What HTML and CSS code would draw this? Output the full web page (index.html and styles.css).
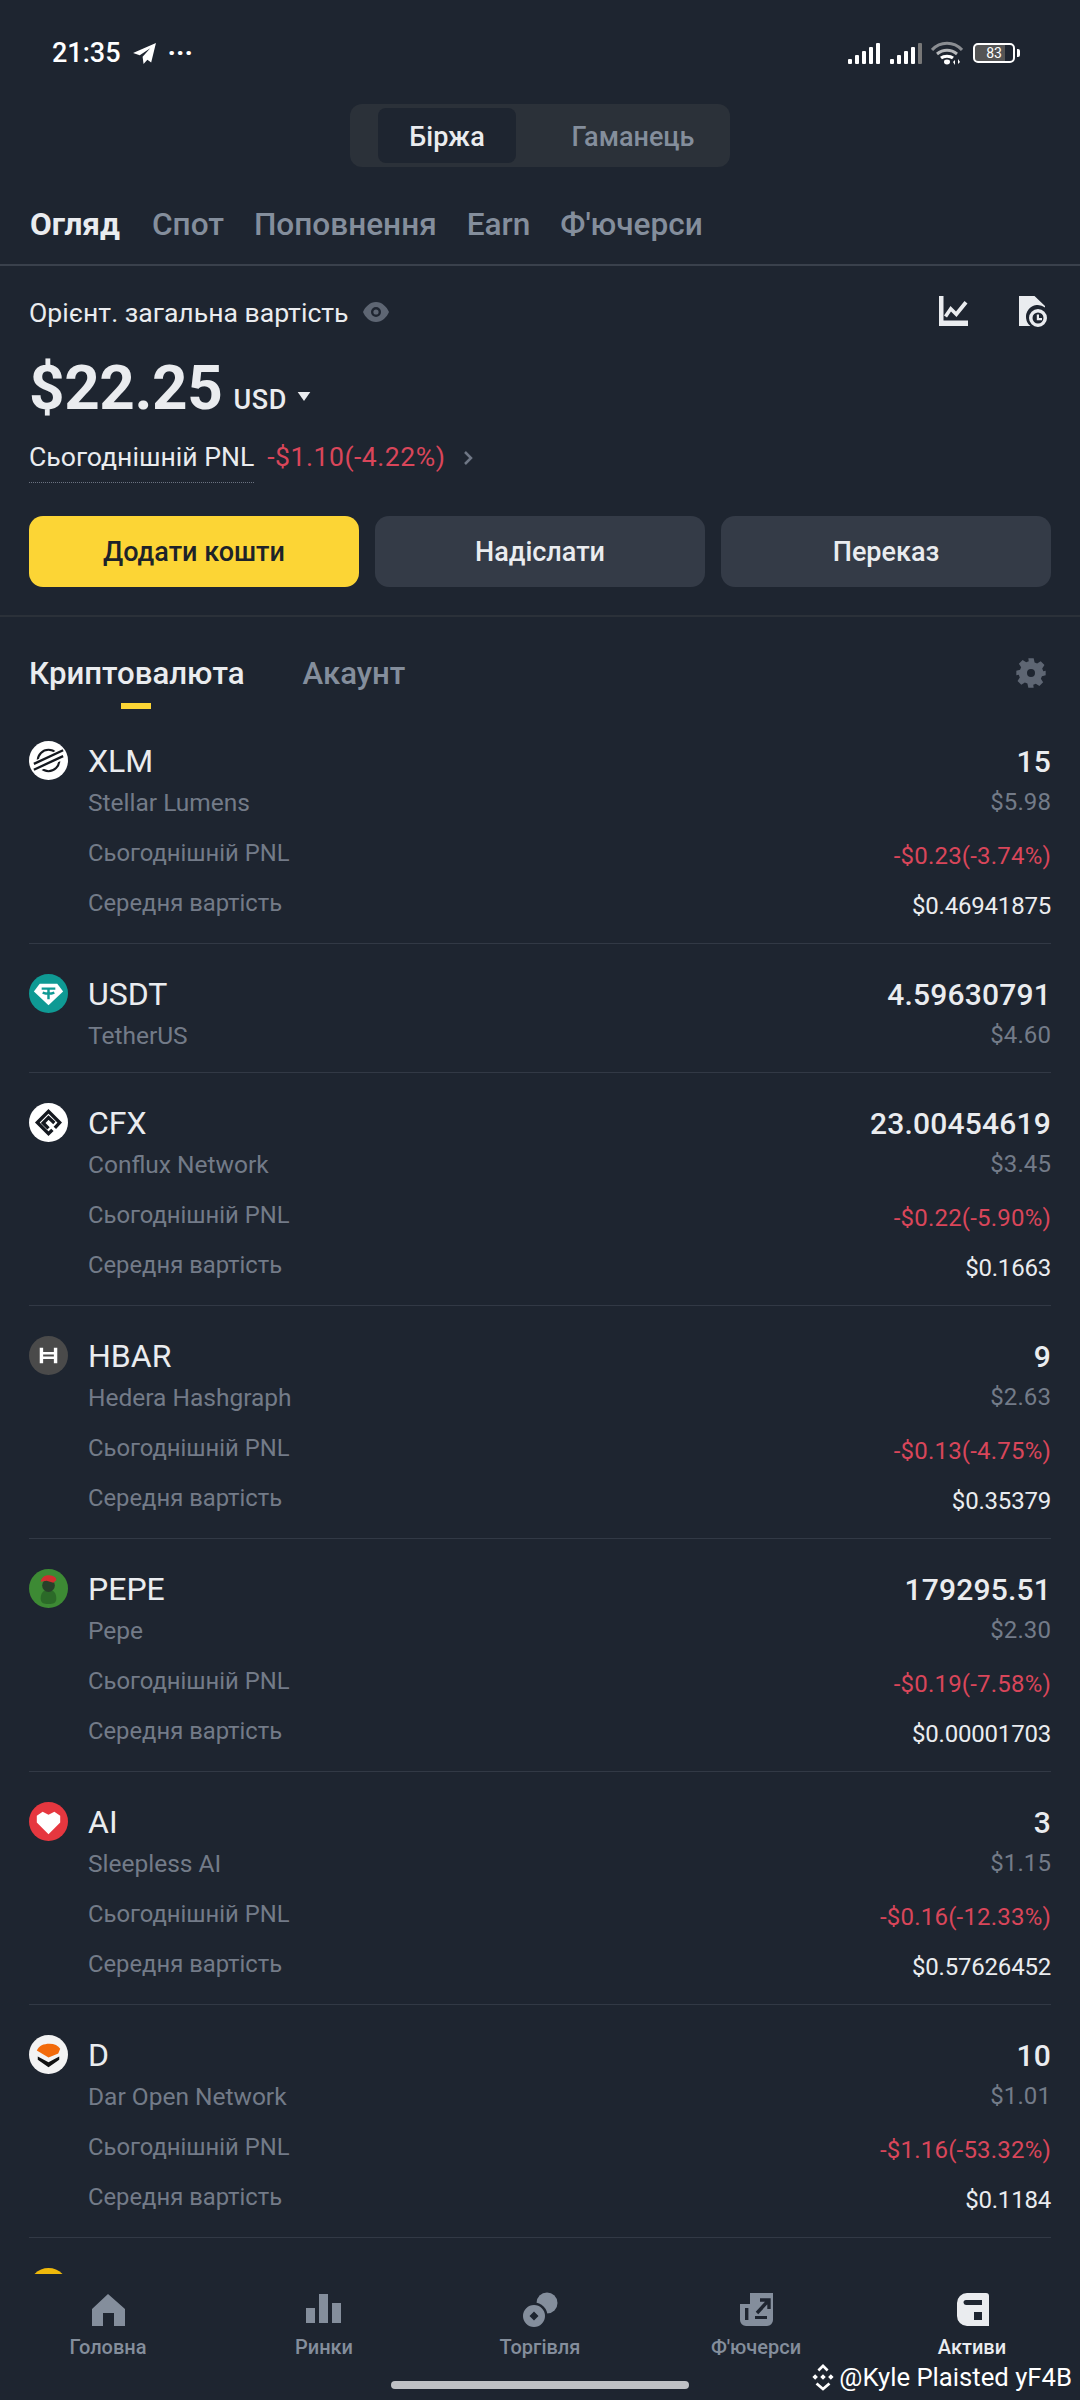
FILE: index.html
```html
<!DOCTYPE html>
<html lang="uk">
<head>
<meta charset="utf-8">
<title>Активи</title>
<link rel="stylesheet" href="styles.css">
</head>
<body>
<div class="app">
  <div class="status">
    <div class="status-left">
      <span class="time">21:35</span>
      <svg class="tg" viewBox="0 0 26 22"><path d="M25 0 1 10.500l7 2.300L19 5.500 11 14.500 12 22l4-4.500 4 3z" fill="#fff"/></svg>
      <span class="dots">···</span>
    </div>
    <div class="status-right">
      <svg class="sig" viewBox="0 0 32 22"><g fill="#fff"><rect x="0" y="17" width="4" height="5" rx="1"/><rect x="7" y="13" width="4" height="9" rx="1"/><rect x="14" y="9" width="4" height="13" rx="1"/><rect x="21" y="5" width="4" height="17" rx="1"/><rect x="28" y="1" width="4" height="21" rx="1"/></g></svg>
      <svg class="sig" viewBox="0 0 32 22"><g fill="#fff"><rect x="0" y="17" width="4" height="5" rx="1"/><rect x="7" y="13" width="4" height="9" rx="1"/><rect x="14" y="9" width="4" height="13" rx="1"/><rect x="21" y="5" width="4" height="17" rx="1"/></g><rect x="28" y="1" width="4" height="21" rx="1" fill="#777"/></svg>
      <svg class="wifi" viewBox="0 0 32 24"><path d="M1 9C9 0 23 0 31 9" fill="none" stroke="#8a8d92" stroke-width="3"/><path d="M6 13c6-5 14-5 20 0" fill="none" stroke="#b5b7ba" stroke-width="3"/><path d="M10 17c3-2.500 9-2.500 12 0" fill="none" stroke="#fff" stroke-width="3"/><ellipse cx="16" cy="21" rx="3" ry="2.400" fill="#fff"/><path d="M24 24v-5l-2 2zM27 18v5l2-2z" fill="#fff"/></svg>
      <div class="batt"><div class="batt-body">83</div><div class="batt-tip"></div></div>
    </div>
  </div>

  <div class="seg-wrap">
    <div class="seg">
      <div class="seg-item seg-on">Біржа</div>
      <div class="seg-item">Гаманець</div>
    </div>
  </div>

  <nav class="tabs">
    <span class="tab tab-on">Огляд</span>
    <span class="tab">Спот</span>
    <span class="tab">Поповнення</span>
    <span class="tab">Earn</span>
    <span class="tab">Ф'ючерси</span>
  </nav>

  <section class="summary">
    <div class="sum-head">
      <div class="sum-label">Орієнт. загальна вартість
        <svg class="eye" viewBox="0 0 28 22"><path fill-rule="evenodd" d="M14 1C8 1 3 6 1 11c2 5 7 10 13 10s11-5 13-10C25 6 20 1 14 1zm0 5a5 5 0 1 1 0 10 5 5 0 0 1 0-10z" fill="#5e6673"/><circle cx="14" cy="11" r="2.600" fill="#5e6673"/></svg>
      </div>
      <div class="sum-icons">
        <svg class="ico" viewBox="0 0 32 32"><path d="M3 1h4.500v24.500H32V31H3z" fill="#eaecef"/><path d="M8 20.500 14.500 11l5.500 5.500L28.500 6l3 2.500L20.500 22 15 16.500l-4 6z" fill="#eaecef"/></svg>
        <svg class="ico" viewBox="0 0 32 32"><path d="M3 1h15.500L29 11v1.500A11 11 0 0 0 14.500 31H3z" fill="#eaecef"/><path fill-rule="evenodd" d="M22 14a9 9 0 1 1 0 18 9 9 0 0 1 0-18zm0 3.500a5.500 5.500 0 1 0 0 11 5.500 5.500 0 0 0 0-11z" fill="#eaecef"/><path d="M20.800 19.500h2.200v3.500h3v2.200h-5.200z" fill="#eaecef"/></svg>
      </div>
    </div>
    <div class="total"><span class="total-num">$22.25</span><span class="total-cur">USD</span><svg class="caret" viewBox="0 0 14 10"><path d="M0 0h14L7 10z" fill="#eaecef"/></svg></div>
    <div class="today">
      <span class="today-label">Сьогоднішній PNL</span>
      <span class="today-val">-$1.10(-4.22%)</span>
      <svg class="chev" viewBox="0 0 10 16"><path d="M2 2l6 6-6 6" fill="none" stroke="#6f7785" stroke-width="2.500"/></svg>
    </div>
    <div class="actions">
      <div class="btn btn-y">Додати кошти</div>
      <div class="btn">Надіслати</div>
      <div class="btn">Переказ</div>
    </div>
  </section>

  <div class="asset-tabs">
    <div class="atab atab-on">Криптовалюта</div>
    <div class="atab">Акаунт</div>
    <svg class="gear" viewBox="0 0 24 24"><path fill-rule="evenodd" fill="#5e6673" d="M10 1h4l.7 3.100 1.900.8 2.700-1.700 2.800 2.800-1.700 2.700.8 1.900L23 10.300v3.400l-2.800.7-.8 1.900 1.700 2.700-2.800 2.800-2.700-1.700-1.900.8L14 23h-4l-.7-3.100-1.900-.8-2.700 1.700-2.800-2.800 1.700-2.700-.8-1.900L1 13.700v-3.400l2.800-.7.8-1.900-1.700-2.700 2.800-2.800 2.700 1.700 1.900-.8zm2 8a3 3 0 1 0 0 6 3 3 0 0 0 0-6z"/></svg>
  </div>

  <div class="rows">
    <article class="row">
      <svg class="coin" viewBox="0 0 40 40"><circle cx="20" cy="20" r="20" fill="#fff"/><circle cx="20" cy="20" r="11" fill="none" stroke="#14181f" stroke-width="2.200"/><path d="M5 24 35 10M5 30 35 16" stroke="#fff" stroke-width="6"/><path d="M5 23.500 35 9.500M5 29.500 35 15.500" stroke="#14181f" stroke-width="2.400"/></svg>
      <div class="row-body">
        <div class="line l1"><span class="sym">XLM</span><span class="qty">15</span></div>
        <div class="line l2"><span class="mut">Stellar Lumens</span><span class="num-mut">$5.98</span></div>
        <div class="line l3"><span class="lab">Сьогоднішній PNL</span><span class="neg">-$0.23(-3.74%)</span></div>
        <div class="line l4"><span class="lab">Середня вартість</span><span class="num">$0.46941875</span></div>
      </div>
    </article>
    <article class="row">
      <svg class="coin" viewBox="0 0 40 40"><circle cx="20" cy="20" r="20" fill="#0f9a94"/><path d="M11 10h18l6 8-15 14L5 18z" fill="#fff"/><path d="M13 15h14M20 15v11M14 19c4 1.500 8 1.500 12 0" stroke="#0f9a94" stroke-width="2.500" fill="none"/></svg>
      <div class="row-body">
        <div class="line l1"><span class="sym">USDT</span><span class="qty">4.59630791</span></div>
        <div class="line l2"><span class="mut">TetherUS</span><span class="num-mut">$4.60</span></div>
      </div>
    </article>
    <article class="row">
      <svg class="coin" viewBox="0 0 40 40"><circle cx="20" cy="20" r="20" fill="#fff"/><path d="M26.500 25.500 31.500 20 20 8.500 8.500 20 20 31.500l4-4" fill="none" stroke="#14181f" stroke-width="3.400"/><path d="M26 20.500 20 15l-5.500 5.500 5.500 5.500" fill="none" stroke="#14181f" stroke-width="3.400"/></svg>
      <div class="row-body">
        <div class="line l1"><span class="sym">CFX</span><span class="qty">23.00454619</span></div>
        <div class="line l2"><span class="mut">Conflux Network</span><span class="num-mut">$3.45</span></div>
        <div class="line l3"><span class="lab">Сьогоднішній PNL</span><span class="neg">-$0.22(-5.90%)</span></div>
        <div class="line l4"><span class="lab">Середня вартість</span><span class="num">$0.1663</span></div>
      </div>
    </article>
    <article class="row">
      <svg class="coin" viewBox="0 0 40 40"><circle cx="20" cy="20" r="20" fill="#4a4a4a"/><path d="M11 12h3.500v4.500h11V12H29v16h-3.500v-4.500h-11V28H11zm3.500 7v2h11v-2z" fill="#fff"/></svg>
      <div class="row-body">
        <div class="line l1"><span class="sym">HBAR</span><span class="qty">9</span></div>
        <div class="line l2"><span class="mut">Hedera Hashgraph</span><span class="num-mut">$2.63</span></div>
        <div class="line l3"><span class="lab">Сьогоднішній PNL</span><span class="neg">-$0.13(-4.75%)</span></div>
        <div class="line l4"><span class="lab">Середня вартість</span><span class="num">$0.35379</span></div>
      </div>
    </article>
    <article class="row">
      <svg class="coin" viewBox="0 0 40 40"><circle cx="20" cy="20" r="20" fill="#3d8a34"/><path d="M12 30c0-5 3-9 8-9s8 4 8 9-3 6-8 6-8-1-8-6z" fill="#2b6a28"/><circle cx="20" cy="17" r="6.500" fill="#28402a"/><path d="M12 13c1-5 5-7 9-6.500 4 .3 7 2 7 5l-3 2.500-7-2z" fill="#d12f2f"/></svg>
      <div class="row-body">
        <div class="line l1"><span class="sym">PEPE</span><span class="qty">179295.51</span></div>
        <div class="line l2"><span class="mut">Pepe</span><span class="num-mut">$2.30</span></div>
        <div class="line l3"><span class="lab">Сьогоднішній PNL</span><span class="neg">-$0.19(-7.58%)</span></div>
        <div class="line l4"><span class="lab">Середня вартість</span><span class="num">$0.00001703</span></div>
      </div>
    </article>
    <article class="row">
      <svg class="coin" viewBox="0 0 40 40"><circle cx="20" cy="20" r="20" fill="#e6373f"/><path d="M20 33 8 21v-7l6-4 6 3 6-3 6 4v7z" fill="#fff"/></svg>
      <div class="row-body">
        <div class="line l1"><span class="sym">AI</span><span class="qty">3</span></div>
        <div class="line l2"><span class="mut">Sleepless AI</span><span class="num-mut">$1.15</span></div>
        <div class="line l3"><span class="lab">Сьогоднішній PNL</span><span class="neg">-$0.16(-12.33%)</span></div>
        <div class="line l4"><span class="lab">Середня вартість</span><span class="num">$0.57626452</span></div>
      </div>
    </article>
    <article class="row">
      <svg class="coin" viewBox="0 0 40 40"><circle cx="20" cy="20" r="20" fill="#f3f3f3"/><path d="M8 16c2-5 7-7 13-7 5 0 9 2 11 5l-2 5-10 4z" fill="#f26a0a"/><path d="M9 22l11 6 11-6v3.500L20 33 9 25.500z" fill="#111"/></svg>
      <div class="row-body">
        <div class="line l1"><span class="sym">D</span><span class="qty">10</span></div>
        <div class="line l2"><span class="mut">Dar Open Network</span><span class="num-mut">$1.01</span></div>
        <div class="line l3"><span class="lab">Сьогоднішній PNL</span><span class="neg">-$1.16(-53.32%)</span></div>
        <div class="line l4"><span class="lab">Середня вартість</span><span class="num">$0.1184</span></div>
      </div>
    </article>
    <article class="row row-end">
      <svg class="coin" viewBox="0 0 40 40"><circle cx="20" cy="20" r="20" fill="#f0b90b"/></svg>
    </article>
  </div>
</div>

<footer class="bottom">
  <div class="bitem"><svg class="bico" viewBox="0 0 36 36"><path d="M18 3 35 18v17H24V22H13v13H2V18z" fill="#848e9c"/></svg><span>Головна</span></div>
  <div class="bitem"><svg class="bico" viewBox="0 0 36 36"><path d="M0 17h9v15H0zM13 3h9v29h-9zM26 12h9v20h-9z" fill="#848e9c"/></svg><span>Ринки</span></div>
  <div class="bitem"><svg class="bico" viewBox="0 0 36 36"><circle cx="25" cy="12" r="10.500" fill="#848e9c"/><circle cx="12" cy="25" r="13.500" fill="#1e2530"/><path fill-rule="evenodd" d="M12 14a11 11 0 1 1 0 22 11 11 0 0 1 0-22zm0 6.500L7.500 25l4.500 4.500 4.500-4.500z" fill="#848e9c"/></svg><span>Торгівля</span></div>
  <div class="bitem"><svg class="bico" viewBox="0 0 36 36"><path d="M12 2h23v27a6 6 0 0 1-6 6H8a6 6 0 0 1-6-6V13h10z" fill="#848e9c"/><path d="M19 22 30 10M22 9h9v9" fill="none" stroke="#1e2530" stroke-width="3.400"/><path d="M7 17h3.400v12H7zM17 25h12v3H17z" fill="#1e2530"/></svg><span>Ф'ючерси</span></div>
  <div class="bitem bitem-on"><svg class="bico" viewBox="0 0 36 36"><path fill-rule="evenodd" d="M13 2h19a3 3 0 0 1 3 3v30H13A10 10 0 0 1 3 25V12A10 10 0 0 1 13 2zm-1 7a2.500 2.500 0 0 0 0 5h16V9zm8 12v8h8v-8z" fill="#eaecef"/></svg><span>Активи</span></div>
</footer>
<div class="homebar"></div>
<div class="mark">
  <svg class="mark-ico" viewBox="0 0 26 30"><path d="M13 1l6 6-2 2-4-4-4 4-2-2zM4.500 12l3 3-3 3-3-3zM21.500 12l3 3-3 3-3-3zM13 12l3 3-3 3-3-3zM7 21l6 5 6-5 2 2-8 7-8-7z" fill="#fff"/></svg>
  <span>@Kyle Plaisted yF4B</span>
</div>
</body>
</html>
```

FILE: styles.css
```css
* { box-sizing: border-box; }
html, body { margin: 0; padding: 0; }
body {
  position: relative;
  width: 1080px;
  height: 2400px;
  overflow: hidden;
  background: #1e2530;
  color: #eaecef;
  font-family: Roboto, "Noto Sans", sans-serif;
}
.app { height: 2400px; overflow: hidden; }

.status { height: 104px; padding: 34px 60px 0 52px; display: flex; justify-content: space-between; align-items: flex-start; }
.status-left { display: flex; align-items: center; height: 38px; }
.time { font-size: 27px; color: #fff; font-weight: 500; }
.tg { width: 25px; height: 21px; margin-left: 11px; }
.dots { font-size: 28px; font-weight: 700; color: #fff; margin-left: 11px; line-height: 20px; }
.status-right { display: flex; align-items: center; height: 38px; gap: 8px; }
.sig { width: 34px; height: 22px; }
.wifi { width: 32px; height: 24px; margin-right: 2px; }
.batt { display: flex; align-items: center; gap: 2px; }
.batt-body { width: 42px; height: 20px; border: 2px solid #fff; border-radius: 5px; font-size: 14px; line-height: 16px; text-align: center; color: #fff; background: linear-gradient(90deg, #555 0 80%, transparent 80%); }
.batt-tip { width: 3px; height: 8px; background: #fff; border-radius: 0 2px 2px 0; }

.seg-wrap { display: flex; justify-content: center; height: 63px; }
.seg { width: 380px; height: 63px; background: #2b3139; border-radius: 12px; padding: 4px 0 4px 28px; display: flex; }
.seg-item { flex: 1; display: flex; align-items: center; justify-content: center; font-size: 27px; font-weight: 500; color: #848e9c; padding: 3px 0 0 20px; }
.seg-on { flex: 0 0 138px; background: #1e2530; color: #eaecef; border-radius: 8px; padding-left: 0; }

.tabs { height: 99px; padding: 18px 0 0 30px; display: flex; gap: 30px; align-items: center; border-bottom: 2px solid #3a414c; }
.tab { font-size: 31.600px; font-weight: 500; color: #848e9c; }
.tab-on { color: #eaecef; font-weight: 700; margin-right: 2px; }

.summary { padding: 22px 29px 0; height: 351px; border-bottom: 2px solid #2b3139; }
.sum-head { height: 48px; display: flex; justify-content: space-between; align-items: center; }
.sum-label { font-size: 26.600px; color: #eaecef; display: flex; align-items: center; gap: 13px; }
.eye { width: 28px; height: 22px; }
.sum-icons { display: flex; gap: 48px; padding: 0 3px 2px 0; }
.ico { width: 32px; height: 32px; }
.total { margin-top: 21px; height: 60px; display: flex; align-items: center; }
.total-num { font-size: 62px; font-weight: 700; letter-spacing: -.4px; }
.total-cur { font-size: 27px; font-weight: 500; margin: 26px 0 0 11px; letter-spacing: .6px; }
.caret { width: 14px; height: 9px; margin: 18px 0 0 10px; }
.today { margin-top: 18px; height: 48px; display: flex; align-items: flex-start; font-size: 26.600px; }
.today-label { color: #eaecef; height: 48px; line-height: 44px; border-bottom: 1px dotted #6b7280; }
.today-val { color: #d9465a; margin-left: 13px; line-height: 44px; letter-spacing: .5px; }
.chev { width: 10px; height: 16px; margin: 15px 0 0 18px; }
.actions { margin-top: 33px; display: grid; grid-template-columns: repeat(3, 1fr); gap: 16px; }
.btn { height: 71px; border-radius: 14px; background: #343b47; display: flex; align-items: center; justify-content: center; font-size: 27px; font-weight: 500; color: #eaecef; }
.btn-y { background: #fcd535; color: #1e2329; }

.asset-tabs { height: 94px; padding: 0 33px 0 29px; display: flex; align-items: center; gap: 58px; }
.atab { font-size: 31.200px; font-weight: 500; color: #848e9c; position: relative; height: 100%; display: flex; align-items: center; padding-top: 18px; }
.atab-on { color: #eaecef; }
.atab-on::after { content: ""; position: absolute; left: 92px; bottom: 2px; width: 30px; height: 6px; background: #fcd535; }
.gear { width: 32px; height: 32px; margin: 18px 0 0 auto; }

.rows { padding: 0 29px; }
.row { display: flex; align-items: flex-start; padding: 30px 0 0; border-bottom: 1px solid #323945; min-height: 129px; }
.row:has(.l4) { height: 233px; }
.row-end { border: 0; }
.coin { width: 39px; height: 39px; flex: none; }
.row-body { flex: 1; margin-left: 20px; }
.line { display: flex; justify-content: space-between; align-items: center; }
.l1 { height: 40px; }
.l2 { height: 40px; margin-top: 1px; }
.l3 { height: 50px; margin-top: 6px; }
.l4 { height: 50px; }
.sym { font-size: 32px; color: #eaecef; }
.mut { font-size: 24.500px; color: #737b88; }
.lab { font-size: 23.800px; color: #737b88; }
.qty { font-size: 30px; font-weight: 500; color: #eaecef; letter-spacing: .2px; }
.num-mut { font-size: 24px; color: #737b88; letter-spacing: .1px; }
.neg { font-size: 24px; color: #d9465a; letter-spacing: .2px; position: relative; top: 3px; }
.num { font-size: 24px; color: #eaecef; letter-spacing: -.2px; position: relative; top: 3px; }

.bottom { position: absolute; left: 0; right: 0; top: 2274px; height: 126px; background: #1e2530; display: grid; grid-template-columns: repeat(5, 1fr); padding-top: 17px; }
.bitem { display: flex; flex-direction: column; align-items: center; color: #848e9c; font-size: 20px; gap: 8px; font-weight: 500; }
.bitem-on { color: #eaecef; }
.bico { width: 36px; height: 36px; }
.homebar { position: absolute; left: 391px; top: 2381px; width: 298px; height: 8px; border-radius: 4px; background: #bfc1c5; }
.mark { position: absolute; right: 8px; top: 2362px; display: flex; align-items: center; gap: 4px; color: #fff; font-size: 25.700px; }
.mark-ico { width: 24px; height: 28px; }
```
